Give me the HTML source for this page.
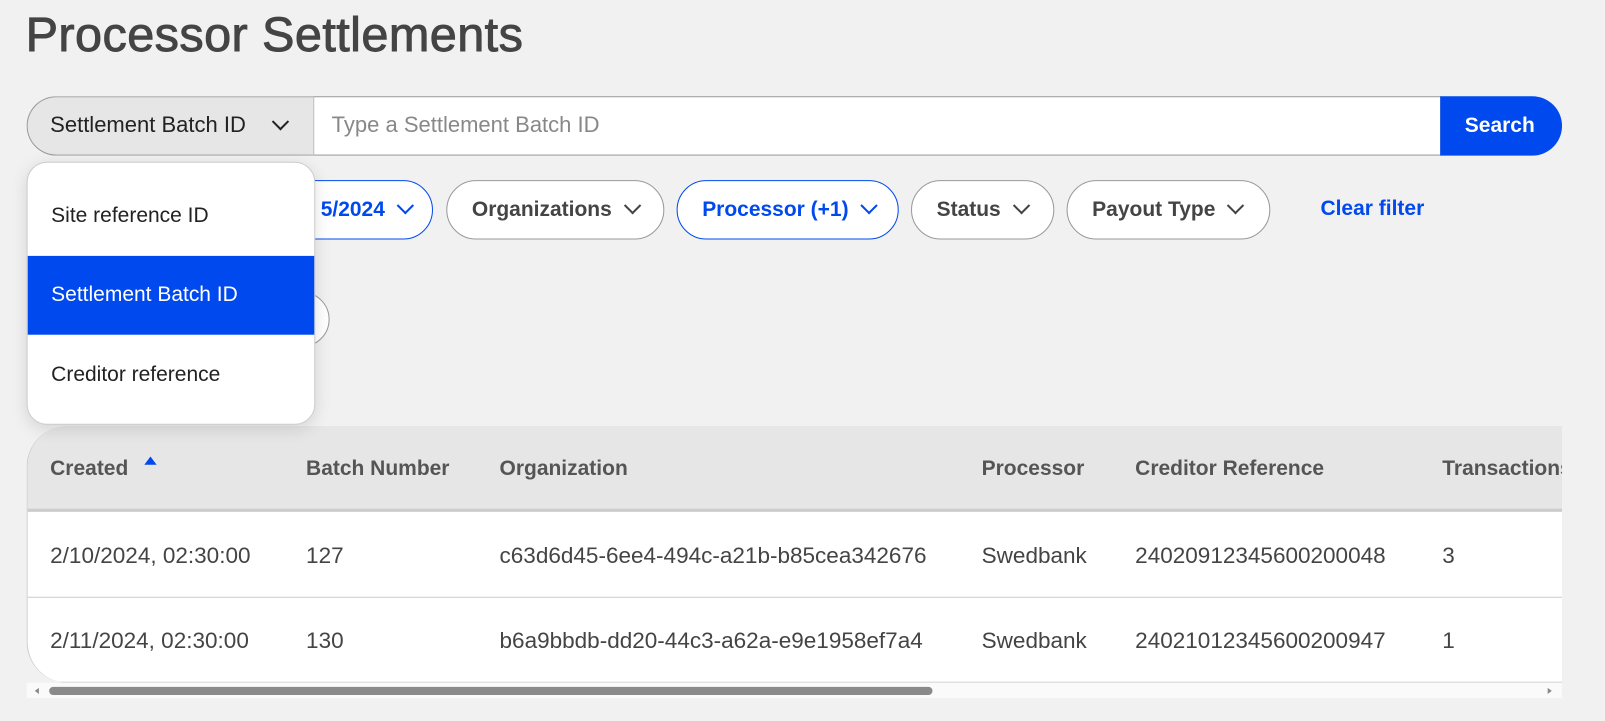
<!DOCTYPE html>
<html><head><style>
*{box-sizing:border-box;margin:0;padding:0}
body{width:1605px;height:720px;background:#f1f1f1;font-family:"Liberation Sans",sans-serif;color:#333;position:relative;overflow:hidden}
#w{position:absolute;left:0;top:0;width:1568px;height:704px;transform:scale(1.0236);transform-origin:0 0}
.a{position:absolute}
h1{position:absolute;left:25px;top:7px;font-size:47.5px;font-weight:normal;color:#444;letter-spacing:0.4px;-webkit-text-stroke:0.9px #444}
.chip{position:absolute;top:176px;height:58px;border:1px solid #999;border-radius:29px;background:#fff;font-size:20.5px;font-weight:bold;color:#444;display:flex;align-items:center;padding-left:24px}
.chip.b{border-color:#0049ee;color:#0049ee}
.chev{display:inline-block;width:12px;height:12px;border-right:2.5px solid currentColor;border-bottom:2.5px solid currentColor;transform:rotate(45deg);margin-left:14px;margin-top:-8px}
.th{position:absolute;top:446px;font-size:20.5px;font-weight:bold;color:#555}
.td{position:absolute;font-size:22px;color:#444}
</style></head><body><div id="w">
<h1>Processor Settlements</h1>
<div class="a" style="left:26px;top:94px;width:281px;height:58px;background:#e6e6e6;border:1px solid #999;border-right:none;border-radius:29px 0 0 29px"></div>
<div class="a" style="left:49px;top:110px;font-size:21.5px;color:#222">Settlement Batch ID</div>
<div class="a" style="left:268px;top:112px;color:#222"><span class="chev" style="margin:0"></span></div>
<div class="a" style="left:306px;top:94px;width:1102px;height:58px;background:#fff;border:1px solid #999;border-left:1px solid #bbb"></div>
<div class="a" style="left:324px;top:110px;font-size:21.5px;color:#888">Type a Settlement Batch ID</div>
<div class="a" style="left:1407px;top:94px;width:119px;height:58px;background:#0049ee;border-radius:0 29px 29px 0;color:#fff;font-size:20.5px;font-weight:bold;display:flex;align-items:center;padding-left:24px">Search</div>

<div class="chip b" style="left:240px;width:183px;justify-content:flex-end;padding-right:20px">5/2024<span class="chev"></span></div>
<div class="chip" style="left:436px;width:213px">Organizations<span class="chev"></span></div>
<div class="chip b" style="left:661px;width:217px">Processor (+1)<span class="chev"></span></div>
<div class="chip" style="left:890px;width:140px">Status<span class="chev"></span></div>
<div class="chip" style="left:1042px;width:199px">Payout Type<span class="chev"></span></div>
<div class="a" style="left:1290px;top:192px;font-size:20.5px;font-weight:bold;color:#0049ee">Clear filter</div>
<div class="a" style="left:200px;top:285px;width:122px;height:54px;border:1px solid #999;border-radius:27px;background:#fff"></div>

<div class="a" style="left:26px;top:416px;width:1500px;height:251px;background:#fff;border-radius:40px 0 0 40px;overflow:hidden;border-left:1px solid #ccc">
 <div class="a" style="left:0;top:0;width:1500px;height:84px;background:#e6e6e6;border-bottom:3px solid #ccc"></div>
 <div class="a" style="left:0;top:167px;width:1500px;height:1px;background:#ccc"></div>
 <div class="a" style="left:0;top:250px;width:1500px;height:1px;background:#ccc"></div>
</div>
<div class="th" style="left:49px">Created</div>
<div class="a" style="left:141px;top:446px;width:0;height:0;border-left:6px solid transparent;border-right:6px solid transparent;border-bottom:8px solid #0049ee"></div>
<div class="th" style="left:299px">Batch Number</div>
<div class="th" style="left:488px">Organization</div>
<div class="th" style="left:959px">Processor</div>
<div class="th" style="left:1109px">Creditor Reference</div>
<div class="th" style="left:1409px;width:117px;overflow:hidden;white-space:nowrap">Transactions</div>
<div class="td" style="left:49px;top:530px">2/10/2024, 02:30:00</div>
<div class="td" style="left:299px;top:530px">127</div>
<div class="td" style="left:488px;top:530px">c63d6d45-6ee4-494c-a21b-b85cea342676</div>
<div class="td" style="left:959px;top:530px">Swedbank</div>
<div class="td" style="left:1109px;top:530px">24020912345600200048</div>
<div class="td" style="left:1409px;top:530px">3</div>
<div class="td" style="left:49px;top:613px">2/11/2024, 02:30:00</div>
<div class="td" style="left:299px;top:613px">130</div>
<div class="td" style="left:488px;top:613px">b6a9bbdb-dd20-44c3-a62a-e9e1958ef7a4</div>
<div class="td" style="left:959px;top:613px">Swedbank</div>
<div class="td" style="left:1109px;top:613px">24021012345600200947</div>
<div class="td" style="left:1409px;top:613px">1</div>
<div class="a" style="left:26px;top:667px;width:1500px;height:15px;background:#fafafa"></div>
<div class="a" style="left:48px;top:671px;width:863px;height:8px;background:#8a8a8a;border-radius:4px"></div>
<div class="a" style="left:34px;top:672px;border-right:4px solid #888;border-top:3px solid transparent;border-bottom:3px solid transparent"></div>
<div class="a" style="left:1512px;top:672px;border-left:4px solid #888;border-top:3px solid transparent;border-bottom:3px solid transparent"></div>

<div class="a" style="left:26px;top:158px;width:282px;height:257px;background:#fff;border:1px solid #ccc;border-radius:20px;box-shadow:0 4px 16px rgba(0,0,0,.12);overflow:hidden">
 <div class="a" style="left:23px;top:40px;font-size:20.5px;color:#222">Site reference ID</div>
 <div class="a" style="left:0;top:91px;width:282px;height:77px;background:#0049ee"></div>
 <div class="a" style="left:23px;top:117px;font-size:20.5px;color:#fff">Settlement Batch ID</div>
 <div class="a" style="left:23px;top:195px;font-size:20.5px;color:#222">Creditor reference</div>
</div>
</div></body></html>
